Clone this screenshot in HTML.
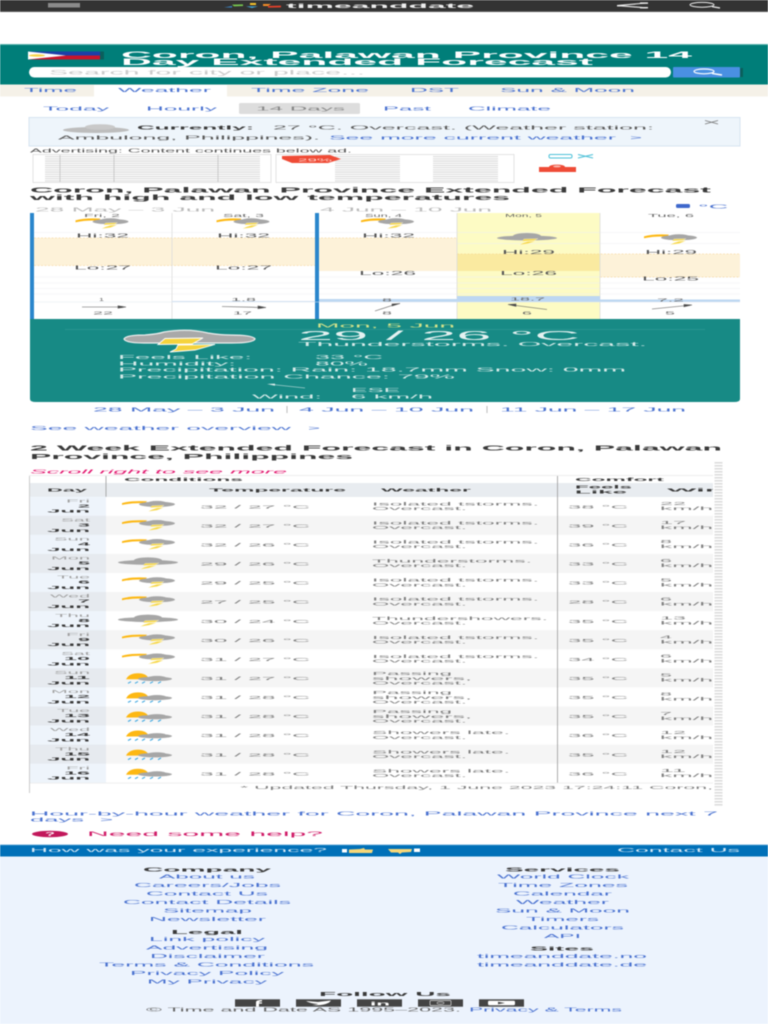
<!DOCTYPE html>
<html><head><meta charset="utf-8"><title>Coron 14 Day Extended Forecast</title>
<style>
html,body{margin:0;padding:0;background:#fff;width:768px;height:1024px;overflow:hidden}
svg{display:block;filter:blur(.5px)}
text{font-family:"Liberation Sans",sans-serif;font-size:5.5px;fill:#666;white-space:pre}
.l{fill:#4a72d0}.b{font-weight:bold;fill:#3a3a3a}.g{fill:#bbb}.w{fill:#fff}.h1{font-size:8.9px;font-weight:bold;fill:#fff}
.h2{font-size:7px;font-weight:bold;fill:#3a3a3a}.s{font-size:5px}.t{font-size:4.8px;fill:#808080}.d{font-size:4.7px;font-weight:bold;fill:#3a3a3a}.n{font-size:4.4px;fill:#a0a0a0}
.m{fill:#d6ebe9;font-size:5.2px}.c{font-size:4.5px;fill:#666}.v{fill:#555;font-size:5.2px}
</style></head><body>
<svg width="768" height="1024" viewBox="0 0 768 1024" xmlns="http://www.w3.org/2000/svg">
<defs>
<pattern id="hash" width="8" height="3" patternUnits="userSpaceOnUse"><rect width="8" height="1.6" fill="#dcdcdc"/></pattern>
<pattern id="ad" width="238" height="2.2" patternUnits="userSpaceOnUse"><rect width="238" height="1" fill="#d8d8d8"/></pattern>
<clipPath id="tc"><rect x="0" y="470" width="713" height="330"/></clipPath>
<g id="ia"><path d="M1 2.4Q10 -.2 26 .6L24 2.6Q12 2 1 4.2Z" fill="#fdb813"/><ellipse cx="36" cy="3.6" rx="18" ry="2.6" fill="#a6a6a6"/><ellipse cx="36" cy="2.6" rx="10" ry="2.4" fill="#a6a6a6"/><path d="M31 5L43 4.6L40 6.4L29 7Z M36 7.2L43 6.8L36 9.6L27 10.8L31 8.8Z" fill="#f7d84a" stroke="#fff" stroke-width=".25"/></g>
<g id="ib"><ellipse cx="30" cy="5" rx="30" ry="2.4" fill="#a6a6a6"/><ellipse cx="30" cy="3" rx="14" ry="3" fill="#a6a6a6"/><path d="M27 6L41 5.6L37 7.6L25 8.2Z M31 8.4L39 8L31 10.6L22 12L26 10Z" fill="#f7d84a" stroke="#fff" stroke-width=".25"/></g>
<g id="ic"><path d="M0 6Q3 0 12 0Q21 0 23 6Z" fill="#fdb813"/><ellipse cx="29" cy="5.6" rx="17" ry="2.2" fill="#a6a6a6"/><ellipse cx="31" cy="4.6" rx="9" ry="2" fill="#a6a6a6"/><path d="M2 10L5 8.4M9 10L12 8.4M16 10L19 8.4M24 10L27 8.4M32 10L35 8.4" stroke="#3fa7e0" stroke-width="1.1"/></g>
</defs>

<!-- top bar -->
<rect width="768" height="11.5" fill="#333"/><rect y="11" width="768" height="1" fill="#555"/>
<rect x="48" y="3" width="32" height="4.5" fill="#8a8a8a"/>
<path d="M224 7.5L232 6V7.5Z" fill="#3a86c8"/><path d="M232 4.6L243 4.4V6L234 6.4Z" fill="#78c850"/><path d="M246 6.4L258 6.4L252 8Z" fill="#44aadd"/><rect x="250" y="3" width="6" height="2" fill="#f5c32c"/><path d="M263 4H271L268 6H263Z" fill="#f58c28"/><path d="M268 6L281 5.6V7.4L268 7.6Z" fill="#e8412a"/>
<text x="286" y="8" class="b" style="fill:#eee;font-size:6px" textLength="188" lengthAdjust="spacingAndGlyphs">timeanddate</text>
<path d="M617 5.6L646 3M617 5.6L646 7.8" stroke="#eee" stroke-width="1.1" fill="none"/><rect x="617" y="5" width="7" height="1.4" fill="#eee"/><rect x="640" y="2.4" width="8" height="1.4" fill="#eee"/><rect x="640" y="7" width="8" height="1.4" fill="#eee"/>
<ellipse cx="702" cy="4.8" rx="12" ry="2.4" fill="none" stroke="#eee" stroke-width="1"/><path d="M712 6.6L720 8" stroke="#eee" stroke-width="1.2"/>

<!-- teal header -->
<rect y="44" width="768" height="40.5" fill="#007e79"/><rect y="44" width="768" height="1" fill="#5db5b0"/>
<rect x="28" y="51.5" width="72" height="4" fill="#1c3fa8"/><rect x="28" y="55.5" width="72" height="4" fill="#c8142c"/><path d="M28 51.5L66 55.5L28 59.5Z" fill="#fff"/><ellipse cx="37" cy="55.5" rx="8" ry="1.3" fill="#f7d54a"/><rect x="100" y="51.5" width="4" height="8" fill="#0a5f5c"/>
<text x="121" y="58" class="h1" textLength="571" lengthAdjust="spacingAndGlyphs">Coron, Palawan Province 14</text>
<text x="121" y="65" class="h1" textLength="472" lengthAdjust="spacingAndGlyphs">Day Extended Forecast</text>
<rect x="29" y="67" width="642" height="10.5" rx="5.2" ry="5.2" fill="#fff"/>
<text x="49" y="74.7" style="fill:#ccc;font-size:6px" textLength="316" lengthAdjust="spacingAndGlyphs">Search for city or place...</text>
<rect x="673" y="67" width="67" height="10.5" rx="1" fill="#4a90e2"/><rect x="740" y="68" width="3" height="9" fill="#0a5f5c"/>
<ellipse cx="704" cy="71.4" rx="10" ry="2.4" fill="none" stroke="#fff" stroke-width="1.2"/><path d="M712 73.4L722 75" stroke="#fff" stroke-width="1.4"/>

<!-- tabs -->
<rect y="84.5" width="768" height="12" fill="#f5f1e8"/><rect x="94" y="85" width="133" height="12" fill="#fff"/>
<text x="24" y="92" class="l" textLength="53" lengthAdjust="spacingAndGlyphs">Time</text>
<text x="118" y="92" class="l" textLength="93" lengthAdjust="spacingAndGlyphs">Weather</text>
<text x="251" y="92" class="l" textLength="118" lengthAdjust="spacingAndGlyphs">Time Zone</text>
<text x="410" y="92" class="l" textLength="49" lengthAdjust="spacingAndGlyphs">DST</text>
<text x="500" y="92" class="l" textLength="135" lengthAdjust="spacingAndGlyphs">Sun &amp; Moon</text>
<!-- subnav -->
<rect x="239" y="103" width="121" height="11" rx="1.5" fill="#ddd"/>
<text x="43" y="110.3" class="l" textLength="66" lengthAdjust="spacingAndGlyphs">Today</text>
<text x="146" y="110.3" class="l" textLength="71" lengthAdjust="spacingAndGlyphs">Hourly</text>
<text x="256" y="110.3" style="fill:#888" textLength="89" lengthAdjust="spacingAndGlyphs">14 Days</text>
<text x="383" y="110.3" class="l" textLength="48" lengthAdjust="spacingAndGlyphs">Past</text>
<text x="468" y="110.3" class="l" textLength="83" lengthAdjust="spacingAndGlyphs">Climate</text>
<!-- currently -->
<rect x="29" y="117.5" width="711" height="28.5" fill="#eef5fb" stroke="#d6e4f1" stroke-width="1"/>
<ellipse cx="96" cy="130" rx="33" ry="3" fill="#bdbdbd"/><ellipse cx="100" cy="127" rx="15" ry="2.8" fill="#c9c9c9"/>
<text x="137" y="129.7" class="b" style="font-size:5.8px" textLength="117" lengthAdjust="spacingAndGlyphs">Currently:</text>
<text x="273" y="129.7" style="font-size:5.6px;fill:#5a5a5a" textLength="381" lengthAdjust="spacingAndGlyphs">27 °C. Overcast. (Weather station:</text>
<text x="58" y="139.7" style="font-size:5.6px;fill:#5a5a5a" textLength="262" lengthAdjust="spacingAndGlyphs">Ambulong, Philippines).</text>
<text x="329" y="139.7" class="l" style="font-size:5.6px" textLength="287" lengthAdjust="spacingAndGlyphs">See more current weather</text>
<text x="630" y="139.7" class="l" style="font-size:5.6px" textLength="12" lengthAdjust="spacingAndGlyphs">&gt;</text>
<path d="M705 120.5L718 124M718 120.5L705 124" stroke="#777" stroke-width=".8"/>
<!-- ad -->
<text x="30" y="152.7" style="font-size:5px;fill:#555" textLength="322" lengthAdjust="spacingAndGlyphs">Advertising: Content continues below ad.</text>
<rect x="33" y="154.5" width="238" height="28" fill="#fff" stroke="#ddd" stroke-width=".8"/><rect x="45" y="155" width="215" height="27" fill="url(#ad)"/><path d="M60 155v27M114 155v27M218 155v27" stroke="#bbb" stroke-width=".7"/>
<rect x="276" y="154.5" width="238" height="28" fill="#fff" stroke="#ddd" stroke-width=".8"/><rect x="335" y="155" width="65" height="27" fill="url(#ad)"/><rect x="433" y="155" width="65" height="27" fill="url(#ad)"/>
<path d="M282 156L330 155L341 159L328 163L292 163L282 159Z" fill="#ef4b36"/><text x="298" y="161.4" style="font-size:4.4px;fill:#ffd9d2" textLength="34" lengthAdjust="spacingAndGlyphs">29%</text>
<rect x="549" y="154.5" width="23" height="3.5" rx="1.5" fill="none" stroke="#4cc0d8" stroke-width="1"/><path d="M578 154.5L593 158M593 154.5L578 158" stroke="#4cc0d8" stroke-width="1"/>
<rect x="539" y="167" width="37" height="5" fill="#ef4b36"/><ellipse cx="557" cy="167" rx="8" ry="2.4" fill="#ef4b36"/><ellipse cx="557" cy="166.4" rx="4" ry="1" fill="#f9b7ad"/>
<!-- h2 -->
<text x="30" y="192.7" class="h2" textLength="681" lengthAdjust="spacingAndGlyphs">Coron, Palawan Province Extended Forecast</text>
<text x="30" y="200" class="h2" textLength="480" lengthAdjust="spacingAndGlyphs">with high and low temperatures</text>

<!-- chart -->
<rect x="29" y="203" width="711" height="116" fill="#fff"/>
<text x="35" y="211.7" class="g" textLength="180" lengthAdjust="spacingAndGlyphs">28 May – 3 Jun</text>
<text x="320" y="211.7" class="g" textLength="172" lengthAdjust="spacingAndGlyphs">4 Jun – 10 Jun</text>
<rect x="676" y="204" width="14" height="4" rx="1.5" fill="#3f68cc"/><text x="698" y="208.3" class="l" textLength="30" lengthAdjust="spacingAndGlyphs">°C</text>
<rect x="457" y="213" width="143" height="106" fill="#fdfbc4"/>
<g stroke="#eef0f3" stroke-width=".6"><path d="M34 232.5H740M34 243.5H740M34 277H740M34 283H740M34 288.5H740M34 294H740"/></g>
<rect x="34" y="238" width="281" height="27.5" fill="#fdf2d9"/><rect x="319" y="238" width="138" height="33" fill="#fdf2d9"/><rect x="457" y="254" width="143" height="17" fill="#faeaa0"/><rect x="600" y="254" width="140" height="23" fill="#fdf2d9"/>
<path d="M34 238H457M34 265.5H315M457 254H740M600 277H740" stroke="#f5cf8a" stroke-width=".5" stroke-dasharray="2 1.5"/>
<rect x="30" y="213" width="4" height="106" fill="#2a86cc"/><rect x="315" y="213" width="4" height="106" fill="#2a86cc"/>
<path d="M172 213V319M457 213V319M600 213V319" stroke="#ddd" stroke-width=".8"/>
<text x="84" y="217" class="c" textLength="36" lengthAdjust="spacingAndGlyphs">Fri, 2</text>
<text x="223" y="217" class="c" textLength="41" lengthAdjust="spacingAndGlyphs">Sat, 3</text>
<text x="365" y="217" class="c" textLength="37" lengthAdjust="spacingAndGlyphs">Sun, 4</text>
<text x="505" y="217" class="c" textLength="37" lengthAdjust="spacingAndGlyphs">Mon, 5</text>
<text x="648" y="217" class="c" textLength="46" lengthAdjust="spacingAndGlyphs">Tue, 6</text>
<use href="#ia" x="74.5" y="218"/><use href="#ia" x="215.5" y="218"/><use href="#ia" x="360" y="218"/>
<use href="#ib" x="497" y="233"/><use href="#ia" x="643" y="234"/>
<text x="76" y="237.7" class="v" textLength="53" lengthAdjust="spacingAndGlyphs">Hi:32</text>
<text x="217" y="237.7" class="v" textLength="53" lengthAdjust="spacingAndGlyphs">Hi:32</text>
<text x="362" y="237.7" class="v" textLength="53" lengthAdjust="spacingAndGlyphs">Hi:32</text>
<text x="502" y="254" class="v" textLength="53" lengthAdjust="spacingAndGlyphs">Hi:29</text>
<text x="645" y="254" class="v" textLength="52" lengthAdjust="spacingAndGlyphs">Hi:29</text>
<text x="74" y="269.7" class="v" textLength="57" lengthAdjust="spacingAndGlyphs">Lo:27</text>
<text x="215" y="269.7" class="v" textLength="57" lengthAdjust="spacingAndGlyphs">Lo:27</text>
<text x="359" y="275" class="v" textLength="57" lengthAdjust="spacingAndGlyphs">Lo:26</text>
<text x="500" y="275" class="v" textLength="57" lengthAdjust="spacingAndGlyphs">Lo:26</text>
<text x="642" y="280.7" class="v" textLength="57" lengthAdjust="spacingAndGlyphs">Lo:25</text>
<rect x="172" y="301" width="143" height="1" fill="#cfe0f4"/><rect x="319" y="299" width="138" height="3" fill="#bdd7f2"/><rect x="457" y="296" width="143" height="6" fill="#bdd7f2"/><rect x="600" y="299.5" width="140" height="2.5" fill="#bdd7f2"/>
<path d="M34 302H740" stroke="#e0e8f0" stroke-width=".6"/>
<text x="99" y="301" class="c" textLength="5" lengthAdjust="spacingAndGlyphs">1</text>
<text x="231" y="301" class="c" textLength="25" lengthAdjust="spacingAndGlyphs">1.8</text>
<text x="382" y="301.5" class="c" textLength="10" lengthAdjust="spacingAndGlyphs">8</text>
<text x="510" y="300.5" class="c" textLength="35" lengthAdjust="spacingAndGlyphs">18.7</text>
<text x="657" y="301.5" class="c" textLength="27" lengthAdjust="spacingAndGlyphs">7.2</text>
<g stroke="#555" stroke-width=".6" fill="#444"><path d="M82 307H122"/><path d="M126 307L118 305.8V308.2Z"/><path d="M222 306.5L262 307.5"/><path d="M266 307.5L258 306V308.6Z"/><path d="M375 311L395 304.5"/><path d="M400 303.5L392 304V306Z"/><path d="M547 309.5L512 305"/><path d="M508 304.5L516 304V306.4Z"/><path d="M652 309L687 305.5"/><path d="M692 305L684 304.4V306.8Z"/></g>
<text x="93" y="314.7" class="c" textLength="20" lengthAdjust="spacingAndGlyphs">22</text>
<text x="233" y="314.7" class="c" textLength="19" lengthAdjust="spacingAndGlyphs">17</text>
<text x="382" y="314.7" class="c" textLength="10" lengthAdjust="spacingAndGlyphs">8</text>
<text x="522" y="314.7" class="c" textLength="10" lengthAdjust="spacingAndGlyphs">6</text>
<text x="665" y="314.7" class="c" textLength="10" lengthAdjust="spacingAndGlyphs">5</text>

<!-- detail panel -->
<path d="M30 319H740V399Q740 402 734 402H36Q30 402 30 399Z" fill="#178a85"/>
<text x="316" y="327.3" style="fill:#d3e28a;font-size:5.2px" textLength="139" lengthAdjust="spacingAndGlyphs">Mon, 5 Jun</text>
<path d="M65 329.5H705" stroke="#3da09a" stroke-width=".5"/>
<path d="M124 339Q126 335 145 335Q158 334 164 332Q188 328 208 333Q220 335 230 335Q253 335 255 339Q253 343 232 343H144Q126 343 124 339Z" fill="#a9a9a9" stroke="#eee" stroke-width="1.3"/>
<path d="M165 338.5L203 338L192 344L158 344.5Z M178 345L215 344.5L195 350L170 352L176 349Z" fill="#f5d33c" stroke="#fff" stroke-width=".9"/>
<text x="298" y="340" style="font-size:12.5px;fill:#e4f2f1" textLength="282" lengthAdjust="spacingAndGlyphs">29 / 26 °C</text>
<text x="298" y="346" class="m" textLength="349" lengthAdjust="spacingAndGlyphs">Thunderstorms. Overcast.</text>
<text x="118" y="359" class="m" textLength="134" lengthAdjust="spacingAndGlyphs">Feels Like:</text><text x="315" y="359" class="m" textLength="68" lengthAdjust="spacingAndGlyphs">33 °C</text>
<text x="118" y="365.7" class="m" textLength="118" lengthAdjust="spacingAndGlyphs">Humidity:</text><text x="315" y="365.7" class="m" textLength="53" lengthAdjust="spacingAndGlyphs">80%</text>
<text x="118" y="371.7" class="m" textLength="508" lengthAdjust="spacingAndGlyphs">Precipitation: Rain: 18.7mm Snow: 0mm</text>
<text x="118" y="378.3" class="m" textLength="337" lengthAdjust="spacingAndGlyphs">Precipitation Chance: 79%</text>
<path d="M305 388L272 384.5" stroke="#dfeeed" stroke-width=".6"/><path d="M267 384L275 383.6V385.8Z" fill="#dfeeed"/>
<text x="351" y="392" class="m" textLength="49" lengthAdjust="spacingAndGlyphs">ESE</text>
<text x="252" y="398.7" class="m" textLength="70" lengthAdjust="spacingAndGlyphs">Wind:</text><text x="351" y="398.7" class="m" textLength="82" lengthAdjust="spacingAndGlyphs">6 km/h</text>
<!-- pager -->
<text x="93" y="411.7" class="l" textLength="182" lengthAdjust="spacingAndGlyphs">28 May – 3 Jun</text>
<path d="M287 406V413M487 406V413" stroke="#aaa" stroke-width=".8"/>
<text x="299" y="411.7" class="l" textLength="175" lengthAdjust="spacingAndGlyphs">4 Jun – 10 Jun</text>
<text x="500" y="411.7" class="l" textLength="186" lengthAdjust="spacingAndGlyphs">11 Jun – 17 Jun</text>
<text x="30" y="430" class="l" textLength="261" lengthAdjust="spacingAndGlyphs">See weather overview</text><text x="308" y="430" class="l" textLength="12" lengthAdjust="spacingAndGlyphs">&gt;</text>

<!-- table heading -->
<text x="30" y="450.7" class="h2" textLength="692" lengthAdjust="spacingAndGlyphs">2 Week Extended Forecast in Coron, Palawan</text>
<text x="30" y="459" class="h2" textLength="323" lengthAdjust="spacingAndGlyphs">Province, Philippines</text>
<text x="30" y="473.3" style="font-size:5.2px;font-style:italic;fill:#e2186f" textLength="257" lengthAdjust="spacingAndGlyphs">Scroll right to see more</text>
<rect x="714.5" y="462" width="8" height="344" fill="url(#hash)"/>

<g clip-path="url(#tc)">
<path d="M29 475.5H713" stroke="#ddd" stroke-width=".6"/>
<rect x="30" y="483" width="683" height="14" fill="#e8ecf0"/>
<text x="124" y="481" class="d" textLength="119" lengthAdjust="spacingAndGlyphs">Conditions</text>
<text x="575" y="481" class="d" textLength="89" lengthAdjust="spacingAndGlyphs">Comfort</text>
<text x="47" y="491.7" class="d" textLength="40" lengthAdjust="spacingAndGlyphs">Day</text>
<text x="209" y="491.7" class="d" textLength="137" lengthAdjust="spacingAndGlyphs">Temperature</text>
<text x="381" y="491.7" class="d" textLength="90" lengthAdjust="spacingAndGlyphs">Weather</text>
<text x="575" y="488.6" class="d" textLength="57" lengthAdjust="spacingAndGlyphs">Feels</text>
<text x="575" y="493.7" class="d" textLength="52" lengthAdjust="spacingAndGlyphs">Like</text>
<text x="667" y="491.7" class="d" textLength="76" lengthAdjust="spacingAndGlyphs">Wind</text>

<rect x="106" y="515.8" width="607" height="19" fill="#f5f5f5"/><rect x="106" y="553.9" width="607" height="19.1" fill="#f5f5f5"/><rect x="106" y="592" width="607" height="19.1" fill="#f5f5f5"/><rect x="106" y="630.2" width="607" height="19.1" fill="#f5f5f5"/><rect x="106" y="668.3" width="607" height="19.1" fill="#f5f5f5"/><rect x="106" y="706.5" width="607" height="19" fill="#f5f5f5"/><rect x="106" y="744.6" width="607" height="19.1" fill="#f5f5f5"/>
<rect x="30" y="496.7" width="76" height="286" fill="#eef4fb"/>
<rect x="30" y="515.8" width="76" height="19" fill="#e6eaef"/><rect x="30" y="553.9" width="76" height="19.1" fill="#e6eaef"/><rect x="30" y="592" width="76" height="19.1" fill="#e6eaef"/><rect x="30" y="630.2" width="76" height="19.1" fill="#e6eaef"/><rect x="30" y="668.3" width="76" height="19.1" fill="#e6eaef"/><rect x="30" y="706.5" width="76" height="19" fill="#e6eaef"/><rect x="30" y="744.6" width="76" height="19.1" fill="#e6eaef"/>
<path d="M106 476V496.7M557.5 476V782.7" stroke="#999" stroke-width=".8"/><path d="M29.5 476V793" stroke="#ccc" stroke-width="1"/>

<g transform="translate(0,496.7)"><text x="66" y="5.7" class="n" textLength="24" lengthAdjust="spacingAndGlyphs">Fri</text><text x="78" y="10.7" class="d" textLength="12" lengthAdjust="spacingAndGlyphs">2</text><text x="47" y="16" class="d" textLength="43" lengthAdjust="spacingAndGlyphs">Jun</text><use href="#ia" x="121" y="4"/><text x="200" y="11.7" class="t" textLength="110" lengthAdjust="spacingAndGlyphs">32 / 27 °C</text><text x="372" y="8.7" class="t" textLength="167" lengthAdjust="spacingAndGlyphs">Isolated tstorms.</text><text x="372" y="13.3" class="t" textLength="95" lengthAdjust="spacingAndGlyphs">Overcast.</text><text x="568" y="11.7" class="t" textLength="60" lengthAdjust="spacingAndGlyphs">38 °C</text><text x="660" y="8.3" class="t" textLength="26" lengthAdjust="spacingAndGlyphs">22</text><text x="660" y="13.3" class="t" textLength="53" lengthAdjust="spacingAndGlyphs">km/h</text></g>
<g transform="translate(0,515.8)"><text x="61" y="5.7" class="n" textLength="29" lengthAdjust="spacingAndGlyphs">Sat</text><text x="78" y="10.7" class="d" textLength="12" lengthAdjust="spacingAndGlyphs">3</text><text x="47" y="16" class="d" textLength="43" lengthAdjust="spacingAndGlyphs">Jun</text><use href="#ia" x="121" y="4"/><text x="200" y="11.7" class="t" textLength="110" lengthAdjust="spacingAndGlyphs">32 / 27 °C</text><text x="372" y="8.7" class="t" textLength="167" lengthAdjust="spacingAndGlyphs">Isolated tstorms.</text><text x="372" y="13.3" class="t" textLength="95" lengthAdjust="spacingAndGlyphs">Overcast.</text><text x="568" y="11.7" class="t" textLength="60" lengthAdjust="spacingAndGlyphs">39 °C</text><text x="660" y="8.3" class="t" textLength="26" lengthAdjust="spacingAndGlyphs">17</text><text x="660" y="13.3" class="t" textLength="53" lengthAdjust="spacingAndGlyphs">km/h</text></g>
<g transform="translate(0,534.8)"><text x="54" y="5.7" class="n" textLength="36" lengthAdjust="spacingAndGlyphs">Sun</text><text x="78" y="10.7" class="d" textLength="12" lengthAdjust="spacingAndGlyphs">4</text><text x="47" y="16" class="d" textLength="43" lengthAdjust="spacingAndGlyphs">Jun</text><use href="#ia" x="121" y="4"/><text x="200" y="11.7" class="t" textLength="110" lengthAdjust="spacingAndGlyphs">32 / 26 °C</text><text x="372" y="8.7" class="t" textLength="167" lengthAdjust="spacingAndGlyphs">Isolated tstorms.</text><text x="372" y="13.3" class="t" textLength="95" lengthAdjust="spacingAndGlyphs">Overcast.</text><text x="568" y="11.7" class="t" textLength="60" lengthAdjust="spacingAndGlyphs">36 °C</text><text x="660" y="8.3" class="t" textLength="12" lengthAdjust="spacingAndGlyphs">8</text><text x="660" y="13.3" class="t" textLength="53" lengthAdjust="spacingAndGlyphs">km/h</text></g>
<g transform="translate(0,553.9)"><text x="51" y="5.7" class="n" textLength="39" lengthAdjust="spacingAndGlyphs">Mon</text><text x="78" y="10.7" class="d" textLength="12" lengthAdjust="spacingAndGlyphs">5</text><text x="47" y="16" class="d" textLength="43" lengthAdjust="spacingAndGlyphs">Jun</text><use href="#ib" x="118" y="3.5"/><text x="200" y="11.7" class="t" textLength="110" lengthAdjust="spacingAndGlyphs">29 / 26 °C</text><text x="372" y="8.7" class="t" textLength="160" lengthAdjust="spacingAndGlyphs">Thunderstorms.</text><text x="372" y="13.3" class="t" textLength="95" lengthAdjust="spacingAndGlyphs">Overcast.</text><text x="568" y="11.7" class="t" textLength="60" lengthAdjust="spacingAndGlyphs">33 °C</text><text x="660" y="8.3" class="t" textLength="12" lengthAdjust="spacingAndGlyphs">6</text><text x="660" y="13.3" class="t" textLength="53" lengthAdjust="spacingAndGlyphs">km/h</text></g>
<g transform="translate(0,573)"><text x="57" y="5.7" class="n" textLength="33" lengthAdjust="spacingAndGlyphs">Tue</text><text x="78" y="10.7" class="d" textLength="12" lengthAdjust="spacingAndGlyphs">6</text><text x="47" y="16" class="d" textLength="43" lengthAdjust="spacingAndGlyphs">Jun</text><use href="#ia" x="121" y="4"/><text x="200" y="11.7" class="t" textLength="110" lengthAdjust="spacingAndGlyphs">29 / 25 °C</text><text x="372" y="8.7" class="t" textLength="167" lengthAdjust="spacingAndGlyphs">Isolated tstorms.</text><text x="372" y="13.3" class="t" textLength="95" lengthAdjust="spacingAndGlyphs">Overcast.</text><text x="568" y="11.7" class="t" textLength="60" lengthAdjust="spacingAndGlyphs">33 °C</text><text x="660" y="8.3" class="t" textLength="12" lengthAdjust="spacingAndGlyphs">5</text><text x="660" y="13.3" class="t" textLength="53" lengthAdjust="spacingAndGlyphs">km/h</text></g>
<g transform="translate(0,592)"><text x="50" y="5.7" class="n" textLength="40" lengthAdjust="spacingAndGlyphs">Wed</text><text x="78" y="10.7" class="d" textLength="12" lengthAdjust="spacingAndGlyphs">7</text><text x="47" y="16" class="d" textLength="43" lengthAdjust="spacingAndGlyphs">Jun</text><use href="#ia" x="121" y="4"/><text x="200" y="11.7" class="t" textLength="110" lengthAdjust="spacingAndGlyphs">27 / 25 °C</text><text x="372" y="8.7" class="t" textLength="167" lengthAdjust="spacingAndGlyphs">Isolated tstorms.</text><text x="372" y="13.3" class="t" textLength="95" lengthAdjust="spacingAndGlyphs">Overcast.</text><text x="568" y="11.7" class="t" textLength="60" lengthAdjust="spacingAndGlyphs">28 °C</text><text x="660" y="8.3" class="t" textLength="12" lengthAdjust="spacingAndGlyphs">6</text><text x="660" y="13.3" class="t" textLength="53" lengthAdjust="spacingAndGlyphs">km/h</text></g>
<g transform="translate(0,611.1)"><text x="55" y="5.7" class="n" textLength="35" lengthAdjust="spacingAndGlyphs">Thu</text><text x="78" y="10.7" class="d" textLength="12" lengthAdjust="spacingAndGlyphs">8</text><text x="47" y="16" class="d" textLength="43" lengthAdjust="spacingAndGlyphs">Jun</text><use href="#ib" x="118" y="3.5"/><text x="200" y="11.7" class="t" textLength="110" lengthAdjust="spacingAndGlyphs">30 / 24 °C</text><text x="372" y="8.7" class="t" textLength="176" lengthAdjust="spacingAndGlyphs">Thundershowers.</text><text x="372" y="13.3" class="t" textLength="95" lengthAdjust="spacingAndGlyphs">Overcast.</text><text x="568" y="11.7" class="t" textLength="60" lengthAdjust="spacingAndGlyphs">35 °C</text><text x="660" y="8.3" class="t" textLength="26" lengthAdjust="spacingAndGlyphs">13</text><text x="660" y="13.3" class="t" textLength="53" lengthAdjust="spacingAndGlyphs">km/h</text></g>
<g transform="translate(0,630.2)"><text x="66" y="5.7" class="n" textLength="24" lengthAdjust="spacingAndGlyphs">Fri</text><text x="78" y="10.7" class="d" textLength="12" lengthAdjust="spacingAndGlyphs">9</text><text x="47" y="16" class="d" textLength="43" lengthAdjust="spacingAndGlyphs">Jun</text><use href="#ia" x="121" y="4"/><text x="200" y="11.7" class="t" textLength="110" lengthAdjust="spacingAndGlyphs">30 / 26 °C</text><text x="372" y="8.7" class="t" textLength="167" lengthAdjust="spacingAndGlyphs">Isolated tstorms.</text><text x="372" y="13.3" class="t" textLength="95" lengthAdjust="spacingAndGlyphs">Overcast.</text><text x="568" y="11.7" class="t" textLength="60" lengthAdjust="spacingAndGlyphs">35 °C</text><text x="660" y="8.3" class="t" textLength="12" lengthAdjust="spacingAndGlyphs">4</text><text x="660" y="13.3" class="t" textLength="53" lengthAdjust="spacingAndGlyphs">km/h</text></g>
<g transform="translate(0,649.3)"><text x="61" y="5.7" class="n" textLength="29" lengthAdjust="spacingAndGlyphs">Sat</text><text x="64" y="10.7" class="d" textLength="26" lengthAdjust="spacingAndGlyphs">10</text><text x="47" y="16" class="d" textLength="43" lengthAdjust="spacingAndGlyphs">Jun</text><use href="#ia" x="121" y="4"/><text x="200" y="11.7" class="t" textLength="110" lengthAdjust="spacingAndGlyphs">31 / 27 °C</text><text x="372" y="8.7" class="t" textLength="167" lengthAdjust="spacingAndGlyphs">Isolated tstorms.</text><text x="372" y="13.3" class="t" textLength="95" lengthAdjust="spacingAndGlyphs">Overcast.</text><text x="568" y="11.7" class="t" textLength="60" lengthAdjust="spacingAndGlyphs">34 °C</text><text x="660" y="8.3" class="t" textLength="12" lengthAdjust="spacingAndGlyphs">6</text><text x="660" y="13.3" class="t" textLength="53" lengthAdjust="spacingAndGlyphs">km/h</text></g>
<g transform="translate(0,668.3)"><text x="54" y="5.7" class="n" textLength="36" lengthAdjust="spacingAndGlyphs">Sun</text><text x="64" y="10.7" class="d" textLength="26" lengthAdjust="spacingAndGlyphs">11</text><text x="47" y="16" class="d" textLength="43" lengthAdjust="spacingAndGlyphs">Jun</text><use href="#ic" x="126" y="5"/><text x="200" y="11.7" class="t" textLength="110" lengthAdjust="spacingAndGlyphs">31 / 27 °C</text><text x="372" y="6.7" class="t" textLength="80" lengthAdjust="spacingAndGlyphs">Passing</text><text x="372" y="11.7" class="t" textLength="100" lengthAdjust="spacingAndGlyphs">showers,</text><text x="372" y="16" class="t" textLength="95" lengthAdjust="spacingAndGlyphs">Overcast.</text><text x="568" y="11.7" class="t" textLength="60" lengthAdjust="spacingAndGlyphs">35 °C</text><text x="660" y="8.3" class="t" textLength="12" lengthAdjust="spacingAndGlyphs">5</text><text x="660" y="13.3" class="t" textLength="53" lengthAdjust="spacingAndGlyphs">km/h</text></g>
<g transform="translate(0,687.4)"><text x="51" y="5.7" class="n" textLength="39" lengthAdjust="spacingAndGlyphs">Mon</text><text x="64" y="10.7" class="d" textLength="26" lengthAdjust="spacingAndGlyphs">12</text><text x="47" y="16" class="d" textLength="43" lengthAdjust="spacingAndGlyphs">Jun</text><use href="#ic" x="126" y="5"/><text x="200" y="11.7" class="t" textLength="110" lengthAdjust="spacingAndGlyphs">31 / 28 °C</text><text x="372" y="6.7" class="t" textLength="80" lengthAdjust="spacingAndGlyphs">Passing</text><text x="372" y="11.7" class="t" textLength="100" lengthAdjust="spacingAndGlyphs">showers,</text><text x="372" y="16" class="t" textLength="95" lengthAdjust="spacingAndGlyphs">Overcast.</text><text x="568" y="11.7" class="t" textLength="60" lengthAdjust="spacingAndGlyphs">35 °C</text><text x="660" y="8.3" class="t" textLength="12" lengthAdjust="spacingAndGlyphs">8</text><text x="660" y="13.3" class="t" textLength="53" lengthAdjust="spacingAndGlyphs">km/h</text></g>
<g transform="translate(0,706.5)"><text x="57" y="5.7" class="n" textLength="33" lengthAdjust="spacingAndGlyphs">Tue</text><text x="64" y="10.7" class="d" textLength="26" lengthAdjust="spacingAndGlyphs">13</text><text x="47" y="16" class="d" textLength="43" lengthAdjust="spacingAndGlyphs">Jun</text><use href="#ic" x="126" y="5"/><text x="200" y="11.7" class="t" textLength="110" lengthAdjust="spacingAndGlyphs">31 / 28 °C</text><text x="372" y="6.7" class="t" textLength="80" lengthAdjust="spacingAndGlyphs">Passing</text><text x="372" y="11.7" class="t" textLength="100" lengthAdjust="spacingAndGlyphs">showers,</text><text x="372" y="16" class="t" textLength="95" lengthAdjust="spacingAndGlyphs">Overcast.</text><text x="568" y="11.7" class="t" textLength="60" lengthAdjust="spacingAndGlyphs">35 °C</text><text x="660" y="8.3" class="t" textLength="12" lengthAdjust="spacingAndGlyphs">7</text><text x="660" y="13.3" class="t" textLength="53" lengthAdjust="spacingAndGlyphs">km/h</text></g>
<g transform="translate(0,725.5)"><text x="50" y="5.7" class="n" textLength="40" lengthAdjust="spacingAndGlyphs">Wed</text><text x="64" y="10.7" class="d" textLength="26" lengthAdjust="spacingAndGlyphs">14</text><text x="47" y="16" class="d" textLength="43" lengthAdjust="spacingAndGlyphs">Jun</text><use href="#ic" x="126" y="5"/><text x="200" y="11.7" class="t" textLength="110" lengthAdjust="spacingAndGlyphs">31 / 28 °C</text><text x="372" y="8.7" class="t" textLength="138" lengthAdjust="spacingAndGlyphs">Showers late.</text><text x="372" y="13.3" class="t" textLength="95" lengthAdjust="spacingAndGlyphs">Overcast.</text><text x="568" y="11.7" class="t" textLength="60" lengthAdjust="spacingAndGlyphs">36 °C</text><text x="660" y="8.3" class="t" textLength="26" lengthAdjust="spacingAndGlyphs">12</text><text x="660" y="13.3" class="t" textLength="53" lengthAdjust="spacingAndGlyphs">km/h</text></g>
<g transform="translate(0,744.6)"><text x="55" y="5.7" class="n" textLength="35" lengthAdjust="spacingAndGlyphs">Thu</text><text x="64" y="10.7" class="d" textLength="26" lengthAdjust="spacingAndGlyphs">15</text><text x="47" y="16" class="d" textLength="43" lengthAdjust="spacingAndGlyphs">Jun</text><use href="#ic" x="126" y="5"/><text x="200" y="11.7" class="t" textLength="110" lengthAdjust="spacingAndGlyphs">31 / 28 °C</text><text x="372" y="8.7" class="t" textLength="138" lengthAdjust="spacingAndGlyphs">Showers late.</text><text x="372" y="13.3" class="t" textLength="95" lengthAdjust="spacingAndGlyphs">Overcast.</text><text x="568" y="11.7" class="t" textLength="60" lengthAdjust="spacingAndGlyphs">35 °C</text><text x="660" y="8.3" class="t" textLength="26" lengthAdjust="spacingAndGlyphs">12</text><text x="660" y="13.3" class="t" textLength="53" lengthAdjust="spacingAndGlyphs">km/h</text></g>
<g transform="translate(0,763.7)"><text x="66" y="5.7" class="n" textLength="24" lengthAdjust="spacingAndGlyphs">Fri</text><text x="64" y="10.7" class="d" textLength="26" lengthAdjust="spacingAndGlyphs">16</text><text x="47" y="16" class="d" textLength="43" lengthAdjust="spacingAndGlyphs">Jun</text><use href="#ic" x="126" y="5"/><text x="200" y="11.7" class="t" textLength="110" lengthAdjust="spacingAndGlyphs">31 / 28 °C</text><text x="372" y="8.7" class="t" textLength="138" lengthAdjust="spacingAndGlyphs">Showers late.</text><text x="372" y="13.3" class="t" textLength="95" lengthAdjust="spacingAndGlyphs">Overcast.</text><text x="568" y="11.7" class="t" textLength="60" lengthAdjust="spacingAndGlyphs">36 °C</text><text x="660" y="8.3" class="t" textLength="26" lengthAdjust="spacingAndGlyphs">11</text><text x="660" y="13.3" class="t" textLength="53" lengthAdjust="spacingAndGlyphs">km/h</text></g>
<path d="M30 783H713" stroke="#ddd" stroke-width=".5"/>
<text x="240" y="789" class="t" textLength="473" lengthAdjust="spacingAndGlyphs">* Updated Thursday, 1 June 2023 17:24:11 Coron,</text>
</g>

<text x="30" y="815.3" class="l" textLength="688" lengthAdjust="spacingAndGlyphs">Hour-by-hour weather for Coron, Palawan Province next 7</text>
<text x="30" y="821.7" class="l" textLength="54" lengthAdjust="spacingAndGlyphs">days</text><text x="100" y="821.7" class="l" textLength="13" lengthAdjust="spacingAndGlyphs">&gt;</text>
<ellipse cx="50" cy="834" rx="18" ry="3.2" fill="#c2185b"/>
<text x="45" y="836" style="font-size:5.5px;font-weight:bold;fill:#fff" textLength="10" lengthAdjust="spacingAndGlyphs">?</text>
<text x="87" y="836" style="font-size:6px;fill:#d01c68" textLength="236" lengthAdjust="spacingAndGlyphs">Need some help?</text>

<!-- feedback bar + footer -->
<rect y="856.5" width="768" height="167.5" fill="#ecf3fd"/>
<rect y="844.5" width="768" height="12" fill="#0070b8"/><rect y="844.5" width="768" height=".8" fill="#6db0dc"/>
<text x="30" y="852" style="fill:#d5e8f5;font-size:5px" textLength="297" lengthAdjust="spacingAndGlyphs">How was your experience?</text>
<rect x="342" y="849" width="5" height="3.5" fill="#fff"/><path d="M349 849.5L360 849L364 848L365 849.5L373 849.5L372 853L349 853Z" fill="#f7d778"/>
<path d="M388 849L412 849L411 852L402 852.5L400 854L398 852.5L391 852.5Z" fill="#f7d778"/><rect x="414" y="848.5" width="6" height="3.5" fill="#fff"/>
<text x="617" y="852" style="fill:#d5e8f5;font-size:5px" textLength="123" lengthAdjust="spacingAndGlyphs">Contact Us</text>

<text x="143" y="871.3" class="b" textLength="128" lengthAdjust="spacingAndGlyphs">Company</text>
<text x="159" y="878.3" class="l" textLength="96" lengthAdjust="spacingAndGlyphs">About us</text>
<text x="134" y="887" class="l" textLength="147" lengthAdjust="spacingAndGlyphs">Careers/Jobs</text>
<text x="146" y="895.3" class="l" textLength="122" lengthAdjust="spacingAndGlyphs">Contact Us</text>
<text x="123" y="904" class="l" textLength="168" lengthAdjust="spacingAndGlyphs">Contact Details</text>
<text x="163" y="912.7" class="l" textLength="89" lengthAdjust="spacingAndGlyphs">Sitemap</text>
<text x="149" y="921" class="l" textLength="117" lengthAdjust="spacingAndGlyphs">Newsletter</text>
<text x="171" y="934" class="b" textLength="72" lengthAdjust="spacingAndGlyphs">Legal</text>
<text x="149" y="941" class="l" textLength="116" lengthAdjust="spacingAndGlyphs">Link policy</text>
<text x="146" y="949.3" class="l" textLength="122" lengthAdjust="spacingAndGlyphs">Advertising</text>
<text x="150" y="958" class="l" textLength="115" lengthAdjust="spacingAndGlyphs">Disclaimer</text>
<text x="99" y="966.7" class="l" textLength="215" lengthAdjust="spacingAndGlyphs">Terms &amp; Conditions</text>
<text x="130" y="975" class="l" textLength="154" lengthAdjust="spacingAndGlyphs">Privacy Policy</text>
<text x="147" y="983.7" class="l" textLength="120" lengthAdjust="spacingAndGlyphs">My Privacy</text>

<text x="505" y="871.3" class="b" textLength="115" lengthAdjust="spacingAndGlyphs">Services</text>
<text x="497" y="878.3" class="l" textLength="132" lengthAdjust="spacingAndGlyphs">World Clock</text>
<text x="498" y="887" class="l" textLength="130" lengthAdjust="spacingAndGlyphs">Time Zones</text>
<text x="513" y="895.3" class="l" textLength="99" lengthAdjust="spacingAndGlyphs">Calendar</text>
<text x="516" y="904" class="l" textLength="93" lengthAdjust="spacingAndGlyphs">Weather</text>
<text x="495" y="912.7" class="l" textLength="135" lengthAdjust="spacingAndGlyphs">Sun &amp; Moon</text>
<text x="526" y="921" class="l" textLength="73" lengthAdjust="spacingAndGlyphs">Timers</text>
<text x="501" y="929.3" class="l" textLength="123" lengthAdjust="spacingAndGlyphs">Calculators</text>
<text x="544" y="938" class="l" textLength="37" lengthAdjust="spacingAndGlyphs">API</text>
<text x="530" y="950.7" class="b" textLength="64" lengthAdjust="spacingAndGlyphs">Sites</text>
<text x="477" y="958" class="l" textLength="170" lengthAdjust="spacingAndGlyphs">timeanddate.no</text>
<text x="477" y="966.7" class="l" textLength="170" lengthAdjust="spacingAndGlyphs">timeanddate.de</text>
<text x="319" y="996" class="b" textLength="132" lengthAdjust="spacingAndGlyphs">Follow Us</text>
<g fill="#444"><rect x="235" y="999.3" width="45" height="7.4"/><rect x="296" y="999.3" width="45" height="7.4"/><rect x="357" y="999.3" width="45" height="7.4"/><rect x="418" y="999.3" width="45" height="7.4"/><rect x="479" y="999.3" width="45" height="7.4"/></g>
<path d="M256 1006.7V1002Q256 1000 262 1000V1001.4Q259 1001.4 259 1002.4H262V1003.6H259V1006.7Z" fill="#fff"/>
<path d="M306 1001L318 1002Q326 1001 331 1000.5L329 1002.6Q322 1006 312 1005Q318 1004.5 318 1004Q310 1003.5 306 1001Z" fill="#fff"/>
<text x="370" y="1005.6" style="font-size:5.4px;font-weight:bold;fill:#fff" textLength="20" lengthAdjust="spacingAndGlyphs">in</text>
<rect x="430" y="1000.5" width="21" height="5" rx="1" fill="none" stroke="#ddd" stroke-width=".7"/><ellipse cx="440.5" cy="1003" rx="3.5" ry="1.2" fill="none" stroke="#ddd" stroke-width=".6"/>
<rect x="488" y="1000.8" width="27" height="4.4" rx="1.2" fill="#fff"/><path d="M498 1001.8L505 1003L498 1004.2Z" fill="#444"/>
<text x="146" y="1011.7" style="font-size:5px;fill:#666" textLength="315" lengthAdjust="spacingAndGlyphs">© Time and Date AS 1995–2023.</text>
<text x="469" y="1011.7" class="l" style="font-size:5px" textLength="153" lengthAdjust="spacingAndGlyphs">Privacy &amp; Terms</text>
</svg>
</body></html>
